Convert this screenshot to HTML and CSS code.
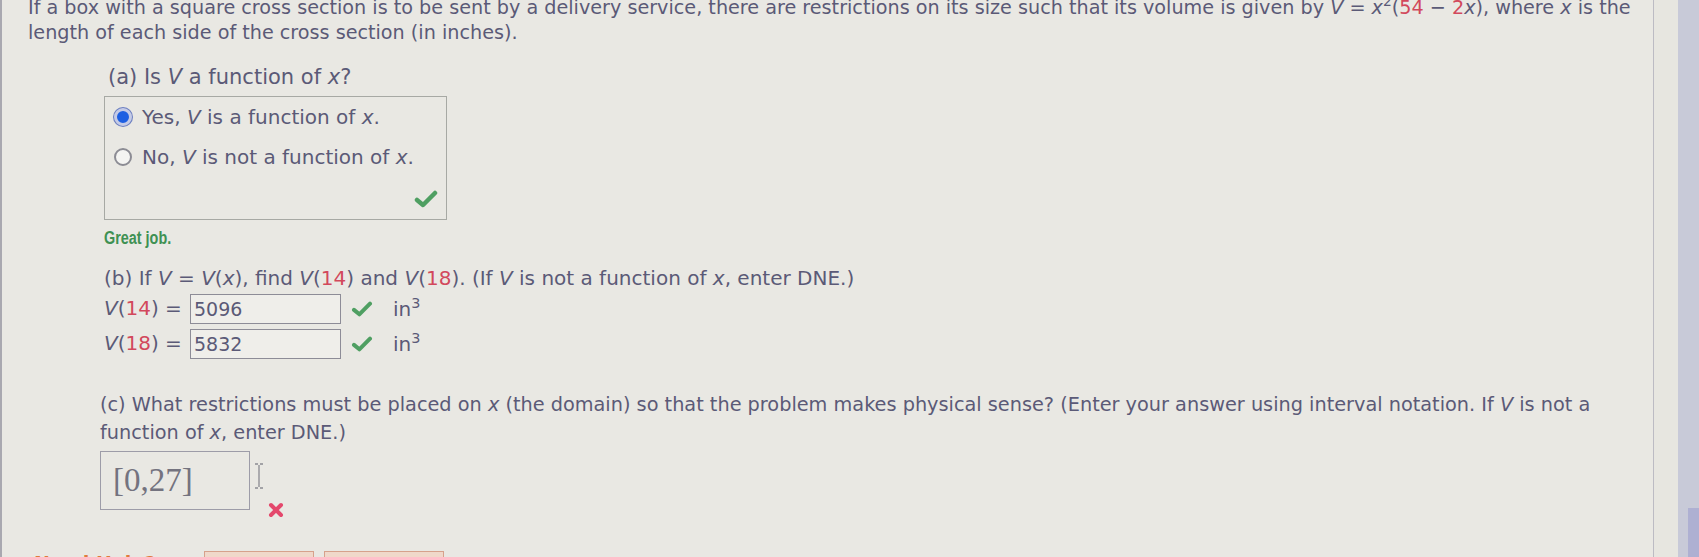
FILE: index.html
```html
<!DOCTYPE html>
<html lang="en">
<head>
<meta charset="utf-8">
<title>Box volume question</title>
<link rel="stylesheet" href="styles.css">
</head>
<body>
<div class="screen">
  <div class="panel">
    <p class="intro">If a box with a square cross section is to be sent by a delivery service, there are restrictions on its size such that its volume is given by <i>V</i> = <i>x</i><sup>2</sup>(<span class="rnd">54</span> &minus; <span class="rnd">2</span><i>x</i>), where <i>x</i> is the<br>length of each side of the cross section (in inches).</p>

    <div class="part part-a">
      <p class="q">(a) Is <i>V</i> a function of <i>x</i>?</p>
      <div class="choices">
        <div class="choice"><span class="radio on"></span><span>Yes, <i>V</i> is a function of <i>x</i>.</span></div>
        <div class="choice"><span class="radio"></span><span>No, <i>V</i> is not a function of <i>x</i>.</span></div>
        <div class="choice-foot">
          <svg class="check" viewBox="0 0 24 18" width="24" height="18"><path d="M3 10 L9 15 L21 3" fill="none" stroke="#4f9f62" stroke-width="4.5" stroke-linecap="round" stroke-linejoin="round"/></svg>
        </div>
      </div>
      <p class="great"><span class="great-text">Great job.</span></p>
    </div>

    <div class="part part-b">
      <p class="q">(b) If <i>V</i> = <i>V</i>(<i>x</i>), find <i>V</i>(<span class="rnd">14</span>) and <i>V</i>(<span class="rnd">18</span>). (If <i>V</i> is not a function of <i>x</i>, enter DNE.)</p>
      <div class="ans-row">
        <span class="lbl"><i>V</i>(<span class="rnd">14</span>) =</span>
        <span class="field">5096</span>
        <svg class="check small" viewBox="0 0 24 18" width="22" height="16"><path d="M3 10 L9 15 L21 3" fill="none" stroke="#4f9f62" stroke-width="4.5" stroke-linecap="round" stroke-linejoin="round"/></svg>
        <span class="unit">in<sup>3</sup></span>
      </div>
      <div class="ans-row">
        <span class="lbl"><i>V</i>(<span class="rnd">18</span>) =</span>
        <span class="field">5832</span>
        <svg class="check small" viewBox="0 0 24 18" width="22" height="16"><path d="M3 10 L9 15 L21 3" fill="none" stroke="#4f9f62" stroke-width="4.5" stroke-linecap="round" stroke-linejoin="round"/></svg>
        <span class="unit">in<sup>3</sup></span>
      </div>
    </div>

    <div class="part part-c">
      <p class="q">(c) What restrictions must be placed on <i>x</i> (the domain) so that the problem makes physical sense? (Enter your answer using interval notation. If <i>V</i> is not a<br>function of <i>x</i>, enter DNE.)</p>
      <div class="interval-row">
        <div class="interval">[0,27]</div>
        <svg class="ibeam" viewBox="0 0 10 26" width="10" height="26"><path d="M1 1 H4 M6 1 H9 M5 2 V24 M1 25 H4 M6 25 H9" fill="none" stroke="#8a8a92" stroke-width="1.3"/></svg>
        <svg class="cross" viewBox="0 0 16 16" width="16" height="16"><path d="M3 3 L13 13 M13 3 L3 13" fill="none" stroke="#e4486c" stroke-width="4" stroke-linecap="round"/></svg>
      </div>
    </div>

    <div class="help">
      <span class="help-label">Need Help?</span>
      <span class="btn">Read It</span>
      <span class="btn wide">Watch It</span>
    </div>
  </div>
  <div class="gutter"></div>
  <div class="scrollbar"><div class="thumb"></div></div>
</div>
</body>
</html>
```

FILE: styles.css
```css
html, body {
  margin: 0;
  padding: 0;
  height: 557px;
  overflow: hidden;
  background: #e9e8e3;
}

.screen {
  display: flex;
  height: 557px;
  border-left: 2px solid #a9a8b0;
  box-sizing: border-box;
  font-family: "DejaVu Sans", Verdana, sans-serif;
  font-size: 19px;
  color: #5b5a77;
}

.panel {
  flex: 1;
  min-width: 0;
  padding-left: 26px;
  border-right: 1px solid #bcbbc3;
}

.gutter {
  width: 24px;
  background: #e7e6e0;
}

.scrollbar {
  width: 21px;
  background: #c8cad8;
  display: flex;
  flex-direction: column;
  justify-content: flex-end;
}

.thumb {
  height: 49px;
  margin-left: 10px;
  background: #aeb0d2;
}

p { margin: 0; }

i { font-style: italic; }

.rnd { color: #d2485c; }

sup {
  font-size: 0.72em;
  line-height: 0;
  vertical-align: 0.55em;
}

.intro {
  margin-top: -5px;
  line-height: 25px;
  white-space: nowrap;
  font-size: 19.2px;
}

.part { line-height: 25px; }

.part-a {
  padding-left: 80px;
  margin-top: 20px;
}

.part-a .q { font-size: 21px; }

.choices {
  margin-top: 6px;
  margin-left: -4px;
  width: 341px;
  height: 122px;
  border: 1px solid #a7a9a4;
  display: flex;
  flex-direction: column;
  font-size: 20px;
}

.choice {
  display: flex;
  align-items: center;
  gap: 10px;
  height: 40px;
  padding-left: 9px;
}

.radio {
  width: 14px;
  height: 14px;
  border-radius: 50%;
  border: 2px solid #8c8c94;
  background: #f4f4f2;
  flex: none;
}

.radio.on {
  width: 12px;
  height: 12px;
  border: 3px solid #c5cbe6;
  background: #1d5fe2;
  box-shadow: 0 0 0 1px #6c7fc0;
}

.choice-foot {
  flex: 1;
  display: flex;
  justify-content: flex-end;
  align-items: flex-end;
  padding: 0 8px 11px 0;
}

.great {
  margin-top: 6px;
  margin-left: -4px;
  color: #3f9153;
  font-weight: bold;
  font-family: "Liberation Sans", Arial, sans-serif;
  font-size: 18px;
}

.great-text {
  display: inline-block;
  transform: scaleX(0.8);
  transform-origin: left center;
}

.part-b {
  padding-left: 76px;
  margin-top: 15px;
  font-size: 20px;
}

.ans-row {
  display: flex;
  align-items: center;
  height: 35px;
}

.lbl { width: 86px; }

.field {
  width: 146px;
  height: 28px;
  line-height: 28px;
  border: 1px solid #8d8c97;
  padding-left: 3px;
  background: #efeeea;
  font-size: 19px;
}

.check.small { margin-left: 10px; }

.unit {
  margin-left: 20px;
  line-height: 1;
}

.part-c {
  padding-left: 72px;
  margin-top: 30px;
  line-height: 28px;
  font-size: 19.3px;
}

.interval-row {
  display: flex;
  margin-top: 4px;
  height: 64px;
}

.interval {
  width: 150px;
  height: 59px;
  border: 1px solid #9d9ca8;
  box-sizing: border-box;
  font-family: "Liberation Serif", "Times New Roman", serif;
  font-size: 33px;
  color: #74737f;
  line-height: 56px;
  padding-left: 12px;
}

.ibeam {
  margin-left: 4px;
  margin-top: 12px;
}

.cross {
  margin-left: 4px;
  margin-top: 51px;
}

.help {
  display: flex;
  align-items: flex-start;
  gap: 10px;
  margin-top: 36px;
}

.help-label {
  color: #e07b3d;
  font-weight: bold;
  font-size: 19px;
  line-height: 1;
  margin-top: 3px;
  margin-left: 6px;
  width: 160px;
}

.btn {
  width: 108px;
  height: 28px;
  border: 1px solid #d7a18c;
  background: #f0d8ca;
  color: #5a4030;
  text-align: center;
  font-size: 15px;
  line-height: 28px;
}

.btn.wide { width: 118px; }
```
